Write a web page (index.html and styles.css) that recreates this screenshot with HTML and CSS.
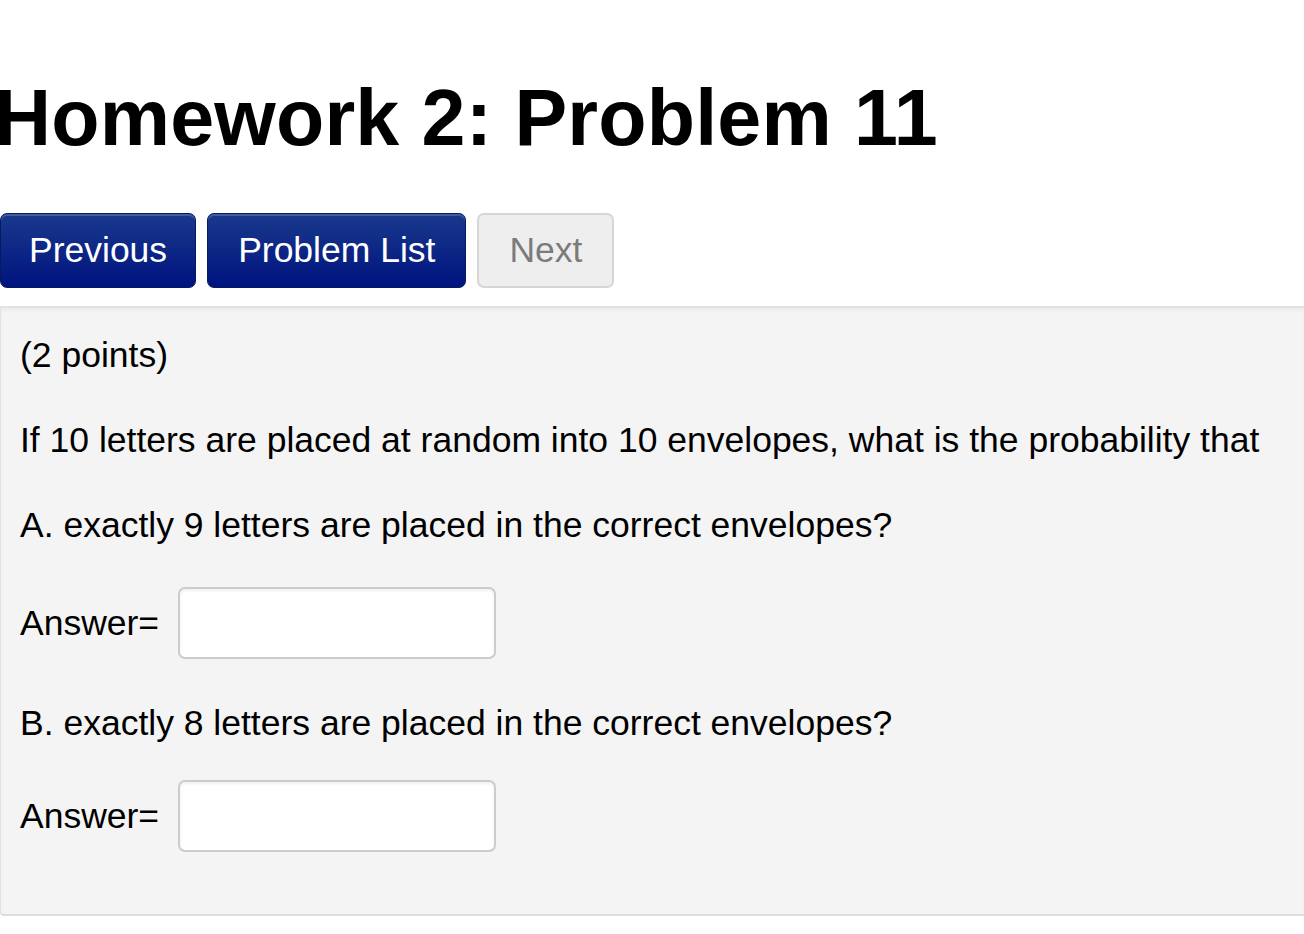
FILE: index.html
```html
<!DOCTYPE html>
<html>
<head>
  <link rel="stylesheet" href="styles.css">
</head>
<body>

<!-- Заголовок -->
<h1 class="problem-title">Homework 2: Problem 11</h1>

<!-- Навигация -->
<div class="problem-nav">
  <a class="nav-btn" href="#">Previous</a>
  <a class="nav-btn wide" href="#">Problem List</a>
  <span class="nav-btn disabled">Next</span>
</div>

<!-- Текст задачи -->
<div class="problem-body">
  <p class="points">(2 points)</p>
  <p>If 10 letters are placed at random into 10 envelopes, what is the probability that</p>
  <p class="part-a">A. exactly 9 letters are placed in the correct envelopes?</p>
  <div class="answer-row">
    <label for="ansA">Answer=</label>
    <input type="text" id="ansA" class="answer-input">
  </div>
  <p class="part-b">B. exactly 8 letters are placed in the correct envelopes?</p>
  <div class="answer-row last">
    <label for="ansB">Answer=</label>
    <input type="text" id="ansB" class="answer-input">
  </div>
</div>

</body>
</html>
```

FILE: styles.css
```css
/* Общие */
body {
  margin: 0;
  background: #fff;
  color: #000;
  font-family: "Liberation Sans", Arial, sans-serif;
  overflow: hidden;
}

/* Заголовок */
.problem-title {
  margin: 75px 0 0 -6px;
  height: 86px;
  font-size: 79px;
  letter-spacing: 0.2px;
  line-height: 86px;
  font-weight: bold;
  white-space: nowrap;
}

/* Кнопки навигации */
.problem-nav {
  display: flex;
  gap: 11px;
  margin-top: 52px;
}
.nav-btn {
  display: block;
  height: 75px;
  box-sizing: border-box;
  padding: 0 28px;
  line-height: 73px;
  font-size: 35.5px;
  color: #fff;
  text-decoration: none;
  background: linear-gradient(#19398c, #00137f);
  border: 1px solid #071a5e;
  border-radius: 7px;
  box-shadow: inset 0 2px 0 rgba(255, 255, 255, .18);
}
.nav-btn.wide {
  padding: 0 30px;
}
.nav-btn.disabled {
  color: #7b7b7b;
  background: #eeeeee;
  border: 2px solid #d6d6d6;
  box-shadow: none;
  padding: 0 30px;
  line-height: 71px;
}

/* Блок задачи */
.problem-body {
  margin-top: 18px;
  background: #f4f4f4;
  border-top: 2px solid #e2e2e2;
  border-bottom: 2px solid #dddddd;
  border-left: 1px solid #e2e2e2;
  border-radius: 0 0 0 4px;
  box-shadow: inset 0 3px 3px rgba(0, 0, 0, .03);
  padding: 22px 0 62px 19px;
}
.problem-body p {
  margin: 0 0 35px;
  font-size: 35.5px;
  line-height: 50px;
}
.problem-body p.part-a {
  margin-bottom: 0;
}
.problem-body p.part-b {
  margin: 39px 0 0;
}

/* Поле ответа */
.answer-row {
  display: flex;
  align-items: center;
  gap: 19px;
  margin-top: 37px;
  font-size: 35.5px;
}
.answer-row.last {
  margin-top: 32px;
}
.answer-input {
  width: 318px;
  height: 72px;
  box-sizing: border-box;
  background: #fff;
  border: 2px solid #cccccc;
  border-radius: 7px;
  box-shadow: inset 0 2px 3px rgba(0, 0, 0, .06);
  font-size: 30px;
  margin: 0;
}
```
